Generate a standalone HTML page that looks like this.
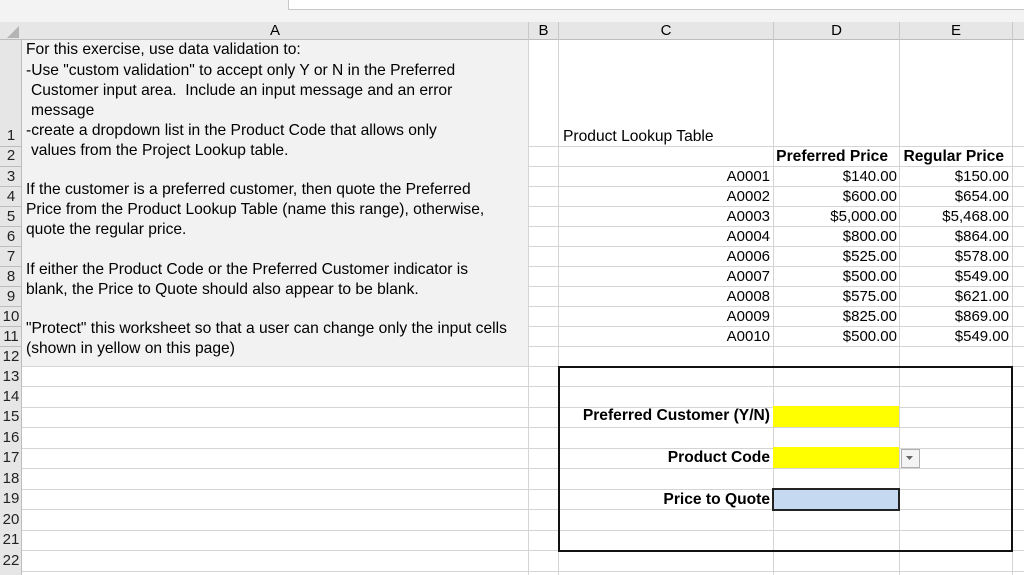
<!DOCTYPE html>
<html><head><meta charset="utf-8"><style>
*{margin:0;padding:0;box-sizing:border-box}
body{width:1024px;height:575px;overflow:hidden;background:#fff;position:relative;font-family:"Liberation Sans",Arial,sans-serif;font-size:15.6px;color:#000}
div{position:absolute}
.h{height:1px;background:#d4d4d4}
.v{width:1px;background:#d4d4d4}
.rn{left:0;width:22px;text-align:center;font-size:15px;line-height:20px;color:#222}
.t{left:26px;white-space:nowrap;line-height:20px}
.r{text-align:right;white-space:nowrap;line-height:20px}
.b{font-weight:bold}
.n{font-size:15px}
</style></head><body>
<div style="left:0;top:0;width:1024px;height:22px;background:#f3f3f3"></div>
<div style="left:288px;top:0;width:736px;height:10px;background:#fff;border-left:1px solid #c8c8c8;border-bottom:1px solid #c8c8c8"></div>
<div style="left:0;top:22px;width:1024px;height:18px;background:#e6e6e6;border-bottom:1px solid #bdbdbd"></div>
<div style="left:0;top:40px;width:22px;height:535px;background:#e6e6e6;border-right:1px solid #bdbdbd"></div>
<svg style="position:absolute;left:4px;top:26px" width="16" height="13"><polygon points="15,0 15,12 3,12" fill="#b4b4b4"/></svg>
<div style="left:22px;top:22px;width:506px;line-height:18px;text-align:center;font-size:15px">A</div>
<div style="left:528px;top:22px;width:30px;line-height:18px;text-align:center;font-size:15px;border-left:1px solid #c8c8c8">B</div>
<div style="left:558px;top:22px;width:215px;line-height:18px;text-align:center;font-size:15px;border-left:1px solid #c8c8c8">C</div>
<div style="left:773px;top:22px;width:126px;line-height:18px;text-align:center;font-size:15px;border-left:1px solid #c8c8c8">D</div>
<div style="left:899px;top:22px;width:113px;line-height:18px;text-align:center;font-size:15px;border-left:1px solid #c8c8c8">E</div>
<div style="left:1012px;top:22px;width:12px;height:18px;border-left:1px solid #c8c8c8"></div>

<div class="v" style="left:528px;top:40px;height:535px"></div>
<div class="v" style="left:558px;top:40px;height:535px"></div>
<div class="v" style="left:773px;top:40px;height:535px"></div>
<div class="v" style="left:899px;top:40px;height:535px"></div>
<div class="v" style="left:1012px;top:40px;height:535px"></div>
<div class="h" style="left:22px;top:146px;width:1002px"></div>
<div class="h" style="left:528px;top:166px;width:496px"></div>
<div class="h" style="left:528px;top:186px;width:496px"></div>
<div class="h" style="left:528px;top:206px;width:496px"></div>
<div class="h" style="left:528px;top:226px;width:496px"></div>
<div class="h" style="left:528px;top:246px;width:496px"></div>
<div class="h" style="left:528px;top:266px;width:496px"></div>
<div class="h" style="left:528px;top:286px;width:496px"></div>
<div class="h" style="left:528px;top:306px;width:496px"></div>
<div class="h" style="left:528px;top:326px;width:496px"></div>
<div class="h" style="left:528px;top:346px;width:496px"></div>
<div class="h" style="left:22px;top:366px;width:1002px"></div>
<div class="h" style="left:22px;top:386px;width:1002px"></div>
<div class="h" style="left:22px;top:407px;width:1002px"></div>
<div class="h" style="left:22px;top:427px;width:1002px"></div>
<div class="h" style="left:22px;top:448px;width:1002px"></div>
<div class="h" style="left:22px;top:468px;width:1002px"></div>
<div class="h" style="left:22px;top:489px;width:1002px"></div>
<div class="h" style="left:22px;top:509px;width:1002px"></div>
<div class="h" style="left:22px;top:530px;width:1002px"></div>
<div class="h" style="left:22px;top:550px;width:1002px"></div>
<div class="h" style="left:22px;top:571px;width:1002px"></div>
<div class="h" style="left:0;top:146px;width:22px;background:#bdbdbd"></div>
<div class="h" style="left:0;top:166px;width:22px;background:#bdbdbd"></div>
<div class="h" style="left:0;top:186px;width:22px;background:#bdbdbd"></div>
<div class="h" style="left:0;top:206px;width:22px;background:#bdbdbd"></div>
<div class="h" style="left:0;top:226px;width:22px;background:#bdbdbd"></div>
<div class="h" style="left:0;top:246px;width:22px;background:#bdbdbd"></div>
<div class="h" style="left:0;top:266px;width:22px;background:#bdbdbd"></div>
<div class="h" style="left:0;top:286px;width:22px;background:#bdbdbd"></div>
<div class="h" style="left:0;top:306px;width:22px;background:#bdbdbd"></div>
<div class="h" style="left:0;top:326px;width:22px;background:#bdbdbd"></div>
<div class="h" style="left:0;top:346px;width:22px;background:#bdbdbd"></div>

<div style="left:22px;top:40px;width:506px;height:326px;background:#f2f2f2"></div>
<div class="t" style="top:40px">For this exercise, use data validation to:</div>
<div class="t" style="top:61px">-Use "custom validation" to accept only Y or N in the Preferred</div>
<div class="t" style="top:81px;left:31px">Customer input area.&nbsp; Include an input message and an error</div>
<div class="t" style="top:101px;left:31px">message</div>
<div class="t" style="top:121px">-create a dropdown list in the Product Code that allows only</div>
<div class="t" style="top:141px;left:31px">values from the Project Lookup table.</div>
<div class="t" style="top:180px">If the customer is a preferred customer, then quote the Preferred</div>
<div class="t" style="top:200px">Price from the Product Lookup Table (name this range), otherwise,</div>
<div class="t" style="top:220px">quote the regular price.</div>
<div class="t" style="top:260px">If either the Product Code or the Preferred Customer indicator is</div>
<div class="t" style="top:280px">blank, the Price to Quote should also appear to be blank.</div>
<div class="t" style="top:319px">"Protect" this worksheet so that a user can change only the input cells</div>
<div class="t" style="top:339px">(shown in yellow on this page)</div>

<div class="rn" style="top:126px">1</div>
<div class="rn" style="top:146px">2</div>
<div class="rn" style="top:167px">3</div>
<div class="rn" style="top:187px">4</div>
<div class="rn" style="top:207px">5</div>
<div class="rn" style="top:227px">6</div>
<div class="rn" style="top:247px">7</div>
<div class="rn" style="top:267px">8</div>
<div class="rn" style="top:287px">9</div>
<div class="rn" style="top:307px">10</div>
<div class="rn" style="top:327px">11</div>
<div class="rn" style="top:347px">12</div>
<div class="rn" style="top:367px">13</div>
<div class="rn" style="top:387px">14</div>
<div class="rn" style="top:407px">15</div>
<div class="rn" style="top:428px">16</div>
<div class="rn" style="top:448px">17</div>
<div class="rn" style="top:469px">18</div>
<div class="rn" style="top:489px">19</div>
<div class="rn" style="top:510px">20</div>
<div class="rn" style="top:530px">21</div>
<div class="rn" style="top:551px">22</div>

<div class="t" style="left:563px;top:127px">Product Lookup Table</div>
<div class="r b" style="left:760px;width:128px;top:147px">Preferred Price</div>
<div class="r b" style="left:880px;width:124px;top:147px">Regular Price</div>

<div class="r n" style="left:558px;width:212px;top:167px">A0001<br>A0002<br>A0003<br>A0004<br>A0006<br>A0007<br>A0008<br>A0009<br>A0010</div>
<div class="r n" style="left:773px;width:124px;top:167px">$140.00<br>$600.00<br>$5,000.00<br>$800.00<br>$525.00<br>$500.00<br>$575.00<br>$825.00<br>$500.00</div>
<div class="r n" style="left:899px;width:110px;top:167px">$150.00<br>$654.00<br>$5,468.00<br>$864.00<br>$578.00<br>$549.00<br>$621.00<br>$869.00<br>$549.00</div>

<div style="left:558px;top:366px;width:455px;height:186px;border:2px solid #111"></div>
<div style="left:773px;top:406px;width:126px;height:21px;background:#ffff00"></div>
<div style="left:773px;top:447px;width:126px;height:21px;background:#ffff00"></div>
<div style="left:772px;top:488px;width:128px;height:23px;background:#c5d9f1;border:2px solid #222"></div>
<div style="left:901px;top:449px;width:19px;height:19px;background:#f4f4f4;border:1px solid #b0b0b0"></div>
<svg style="position:absolute;left:906px;top:456px" width="8" height="5"><polygon points="0,0 7,0 3.5,4" fill="#666"/></svg>
<div class="r b" style="left:560px;width:210px;top:406px">Preferred Customer (Y/N)</div>
<div class="r b" style="left:560px;width:210px;top:448px">Product Code</div>
<div class="r b" style="left:560px;width:210px;top:490px">Price to Quote</div>
</body></html>
